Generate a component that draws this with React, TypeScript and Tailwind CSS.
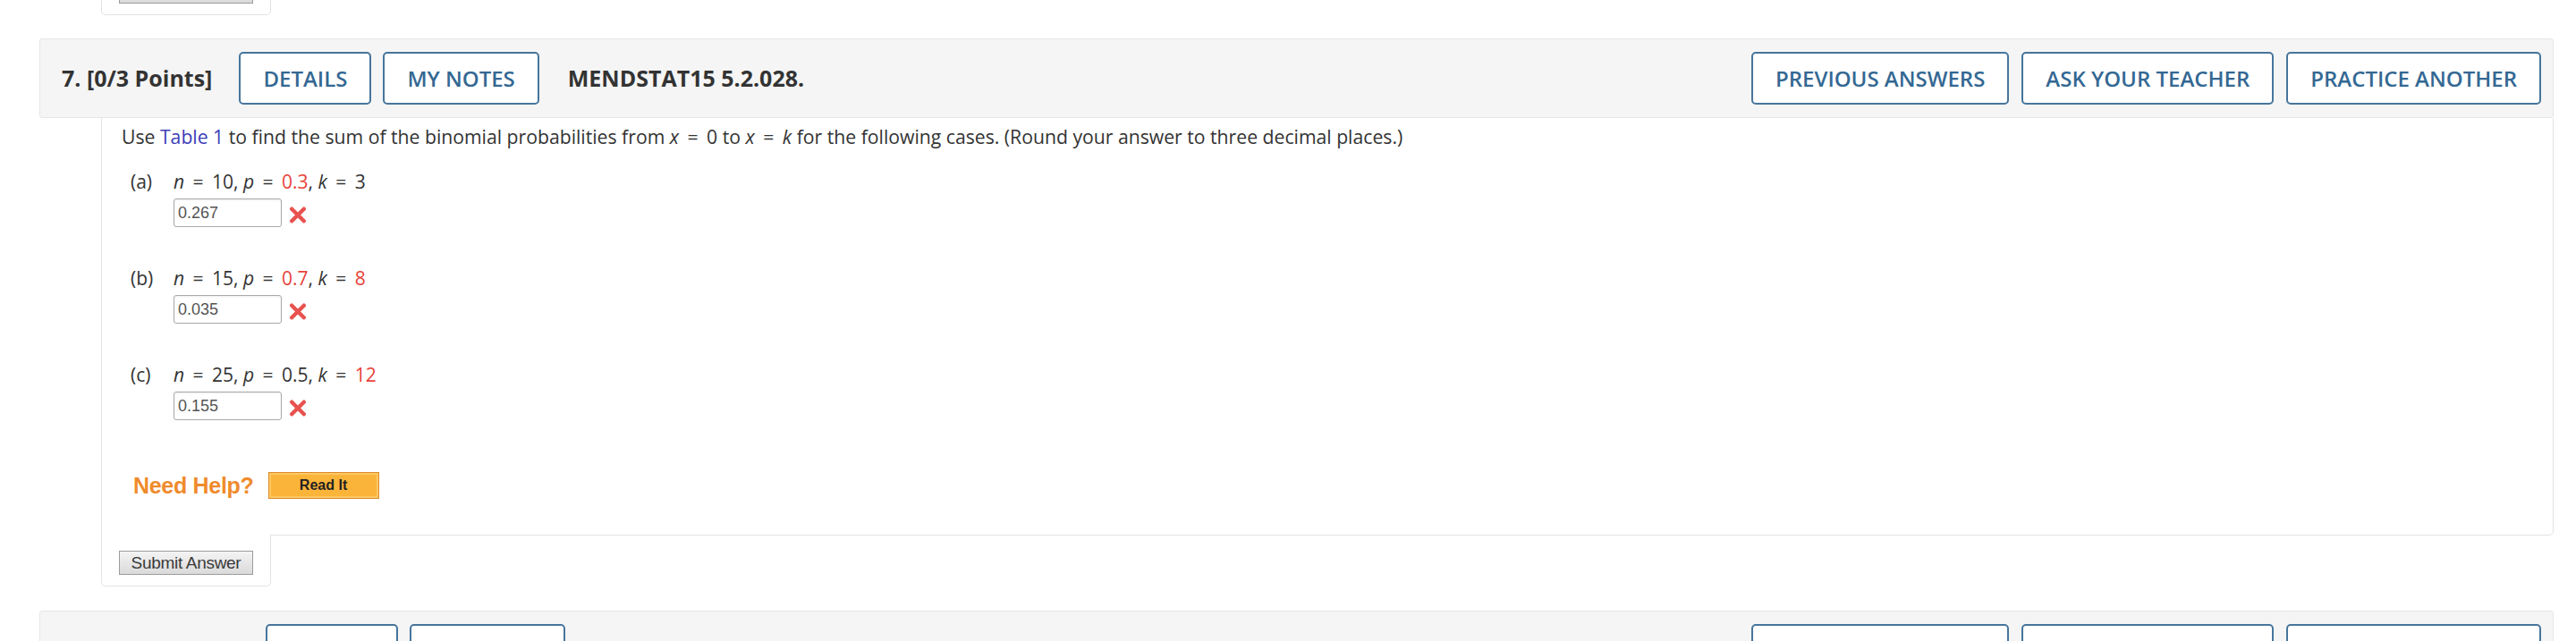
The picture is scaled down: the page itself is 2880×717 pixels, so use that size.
import React from "react";

function HeaderButton({ children }: { children: React.ReactNode }) {
  return (
    <button className="h-[59px] shrink-0 rounded-[5px] border-2 border-[#46759c] bg-white px-[25px] font-['Open_Sans',sans-serif] text-[24px] font-semibold leading-none text-[#346893]">
      {children}
    </button>
  );
}

function QuestionHeader({ label, code }: { label: string; code: string }) {
  return (
    <div className="flex h-[89px] items-center rounded-[3px] border border-[#e6e6e6] bg-[#f5f5f5] pl-[24px] pr-[13px] font-['Open_Sans',sans-serif]">
      <span className="mr-[30px] text-[25px] font-bold text-[#333]">{label}</span>
      <div className="flex gap-[13px]">
        <HeaderButton>DETAILS</HeaderButton>
        <HeaderButton>MY NOTES</HeaderButton>
      </div>
      <span className="ml-[32px] text-[25px] font-bold text-[#333]">{code}</span>
      <div className="ml-auto flex gap-[14px]">
        <HeaderButton>PREVIOUS ANSWERS</HeaderButton>
        <HeaderButton>ASK YOUR TEACHER</HeaderButton>
        <HeaderButton>PRACTICE ANOTHER</HeaderButton>
      </div>
    </div>
  );
}

function RedX() {
  return (
    <svg width="20" height="19" viewBox="0 0 20 19" className="ml-[8px] mt-[4px] shrink-0">
      <path d="M3.2 2.7 L16.8 16.3 M16.8 2.7 L3.2 16.3" stroke="#e8524f" strokeWidth="4.4" strokeLinecap="round" />
    </svg>
  );
}

function SubmitButton({ label = "Submit Answer" }: { label?: string }) {
  return (
    <button className="h-[27px] w-[150px] shrink-0 border border-[#9c9c9c] bg-gradient-to-b from-[#f4f4f4] to-[#dadada] font-['Liberation_Sans',Arial,sans-serif] text-[19px] leading-none tracking-[-0.3px] text-[#3a3a3a]">
      {label}
    </button>
  );
}

const Eq = () => <span className="mx-[4px]">=</span>;

function Part({
  label,
  children,
  value,
}: {
  label: string;
  children: React.ReactNode;
  value: string;
}) {
  return (
    <div className="flex flex-col">
      <div className="flex h-[24px] items-center whitespace-nowrap">
        <span className="w-[48px] shrink-0">{label}</span>
        <span>{children}</span>
      </div>
      <div className="mt-[6px] flex items-center pl-[48px]">
        <input
          readOnly
          value={value}
          className="h-[32px] w-[121px] rounded-[3px] border border-[#a9a9a9] bg-white px-[4px] font-['Liberation_Sans',Arial,sans-serif] text-[18px] text-[#555] shadow-[inset_0_1px_2px_rgba(0,0,0,0.08)] outline-none"
        />
        <RedX />
      </div>
    </div>
  );
}

const R = ({ children }: { children: React.ReactNode }) => (
  <span className="text-[#e8433a]">{children}</span>
);
const I = ({ children }: { children: React.ReactNode }) => <i>{children}</i>;

export default function App() {
  return (
    <div className="h-[717px] overflow-hidden bg-white">
      <div className="pl-[44px] pr-[25px]">
        {/* previous question's submit tab */}
        <div className="ml-[69px] flex h-[17px] w-[190px] flex-col justify-end overflow-hidden rounded-b-[5px] border-x border-b border-[#e3e3e3] pb-[12px] pl-[19px]">
          <SubmitButton label="" />
        </div>

        <div className="mt-[26px]">
          <QuestionHeader label="7.  [0/3 Points]" code="MENDSTAT15 5.2.028." />
        </div>

        {/* body */}
        <div className="ml-[69px] rounded-br-[5px] border-x border-b border-[#e3e3e3] pb-[40px] pl-[22px] pt-[9px] font-['Open_Sans',sans-serif] text-[21px] text-[#333]">
          <div className="flex h-[24px] items-center whitespace-nowrap text-[21.2px]">
            <span>
              Use <span className="text-[#3d3db8]">Table 1</span> to find the sum of the binomial
              probabilities from <I>x</I> <Eq /> 0 to <I>x</I> <Eq /> <I>k</I> for the following
              cases. (Round your answer to three decimal places.)
            </span>
          </div>

          <div className="mt-[27px] flex flex-col gap-[46px] pl-[10px]">
            <Part label="(a)" value="0.267">
              <I>n</I> <Eq /> 10, <I>p</I> <Eq /> <R>0.3</R>, <I>k</I> <Eq /> 3
            </Part>
            <Part label="(b)" value="0.035">
              <I>n</I> <Eq /> 15, <I>p</I> <Eq /> <R>0.7</R>, <I>k</I> <Eq /> <R>8</R>
            </Part>
            <Part label="(c)" value="0.155">
              <I>n</I> <Eq /> 25, <I>p</I> <Eq /> 0.5, <I>k</I> <Eq /> <R>12</R>
            </Part>
          </div>

          <div className="mt-[58px] flex h-[30px] items-center pl-[13px]">
            <span className="font-['Liberation_Sans',Arial,sans-serif] text-[25px] font-bold leading-none tracking-[-0.3px] text-[#ef8b2c]">
              Need Help?
            </span>
            <button className="ml-[16px] flex h-[30px] w-[124px] items-center justify-center border border-[#df8a2a] bg-[#fbb43a] shadow-[inset_0_0_0_2px_#fcc862] font-['Liberation_Sans',Arial,sans-serif] text-[16px] font-bold leading-none text-[#222]">
              Read It
            </button>
          </div>
        </div>

        {/* submit tab */}
        <div className="relative -mt-px ml-[69px] flex h-[58px] w-[190px] items-start rounded-b-[5px] border-x border-b border-[#e3e3e3] bg-white pl-[19px] pt-[18px]">
          <SubmitButton />
        </div>

        <div className="mt-[27px]">
          <QuestionHeader label="8.  [-/3.33 Points]" code="MENDSTAT15 5.2.030." />
        </div>
      </div>
    </div>
  );
}
